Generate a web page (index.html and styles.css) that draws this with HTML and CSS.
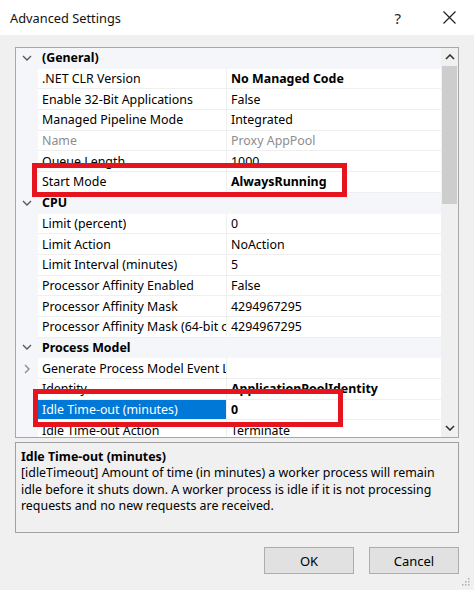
FILE: index.html
```html
<!DOCTYPE html>
<html>
<head>
<meta charset="utf-8">
<link rel="stylesheet" href="styles.css">
</head>
<body>
<div class="page">
  <div class="titlebar">
    <span class="title">Advanced Settings</span>
    <span class="help">?</span>
    <svg class="close" width="13" height="13" viewBox="0 0 13 13"><path d="M0.5 0.5 L12.5 12.5 M12.5 0.5 L0.5 12.5" stroke="#222" stroke-width="1.2" fill="none"/></svg>
  </div>
  <div class="body">
    <div class="grid">
      <div class="rows">
        <div class="cat"><span class="gut"><svg width="10" height="6" viewBox="0 0 10 6"><polyline points="1,1 5,5 9,1" fill="none" stroke="#555" stroke-width="1.3"/></svg></span><span class="catname">(General)</span></div>
        <div class="row"><span class="gut"></span><span class="name">.NET CLR Version</span><span class="val b">No Managed Code</span></div>
        <div class="row"><span class="gut"></span><span class="name">Enable 32-Bit Applications</span><span class="val">False</span></div>
        <div class="row"><span class="gut"></span><span class="name">Managed Pipeline Mode</span><span class="val">Integrated</span></div>
        <div class="row dis"><span class="gut"></span><span class="name">Name</span><span class="val">Proxy AppPool</span></div>
        <div class="row"><span class="gut"></span><span class="name">Queue Length</span><span class="val">1000</span></div>
        <div class="row"><span class="gut"></span><span class="name">Start Mode</span><span class="val b">AlwaysRunning</span></div>
        <div class="cat"><span class="gut"><svg width="10" height="6" viewBox="0 0 10 6"><polyline points="1,1 5,5 9,1" fill="none" stroke="#555" stroke-width="1.3"/></svg></span><span class="catname">CPU</span></div>
        <div class="row"><span class="gut"></span><span class="name">Limit (percent)</span><span class="val">0</span></div>
        <div class="row"><span class="gut"></span><span class="name">Limit Action</span><span class="val">NoAction</span></div>
        <div class="row"><span class="gut"></span><span class="name">Limit Interval (minutes)</span><span class="val">5</span></div>
        <div class="row"><span class="gut"></span><span class="name">Processor Affinity Enabled</span><span class="val">False</span></div>
        <div class="row"><span class="gut"></span><span class="name">Processor Affinity Mask</span><span class="val">4294967295</span></div>
        <div class="row"><span class="gut"></span><span class="name">Processor Affinity Mask (64-bit option)</span><span class="val">4294967295</span></div>
        <div class="cat"><span class="gut"><svg width="10" height="6" viewBox="0 0 10 6"><polyline points="1,1 5,5 9,1" fill="none" stroke="#555" stroke-width="1.3"/></svg></span><span class="catname">Process Model</span></div>
        <div class="row"><span class="gut"><svg width="6" height="10" viewBox="0 0 6 10"><polyline points="1,1 5,5 1,9" fill="none" stroke="#888" stroke-width="1.3"/></svg></span><span class="name">Generate Process Model Event Log Entry</span><span class="val"></span></div>
        <div class="row"><span class="gut"></span><span class="name">Identity</span><span class="val b">ApplicationPoolIdentity</span></div>
        <div class="row sel"><span class="gut"></span><span class="name">Idle Time-out (minutes)</span><span class="val b">0</span></div>
        <div class="row"><span class="gut"></span><span class="name">Idle Time-out Action</span><span class="val">Terminate</span></div>
      </div>
      <div class="scrollbar">
        <div class="arrow"><svg width="10" height="6" viewBox="0 0 10 6"><polyline points="1,5 5,1 9,5" fill="none" stroke="#333" stroke-width="1.6"/></svg></div>
        <div class="thumb"></div>
        <div class="track"></div>
        <div class="arrow"><svg width="10" height="6" viewBox="0 0 10 6"><polyline points="1,1 5,5 9,1" fill="none" stroke="#333" stroke-width="1.6"/></svg></div>
      </div>
    </div>
    <div class="desc">
      <div class="desc-title">Idle Time-out (minutes)</div>
      <div class="desc-text">[idleTimeout] Amount of time (in minutes) a worker process will remain idle before it shuts down. A worker process is idle if it is not processing requests and no new requests are received.</div>
    </div>
    <div class="buttons">
      <div class="btn">OK</div>
      <div class="btn">Cancel</div>
    </div>
  </div>
  <div class="mark mark1"></div>
  <div class="mark mark2"></div>
  <svg class="grip" width="10" height="10" viewBox="0 0 10 10"><g fill="#b0b0b0"><rect x="8" y="0" width="1.5" height="1.5"/><rect x="5" y="3" width="1.5" height="1.5"/><rect x="8" y="3" width="1.5" height="1.5"/><rect x="2" y="6" width="1.5" height="1.5"/><rect x="5" y="6" width="1.5" height="1.5"/><rect x="8" y="6" width="1.5" height="1.5"/></g></svg>
</div>
</body>
</html>
```
FILE: styles.css
```css
html, body {
  margin: 0;
  padding: 0;
}
body {
  font-family: "Noto Sans", "Open Sans", sans-serif;
  font-size: 12.4px;
  color: #000;
  background: #f0f0f0;
}
.page {
  position: relative;
  width: 474px;
  height: 590px;
  overflow: hidden;
  background: #f0f0f0;
}
.titlebar {
  height: 35px;
  background: #fff;
  display: flex;
  align-items: center;
  padding-left: 10px;
  box-sizing: border-box;
}
.title {
  font-size: 12.8px;
  flex: 1;
  color: #111;
}
.help {
  font-size: 15px;
  color: #222;
  margin-right: 42px;
}
.close {
  margin-right: 18px;
}
.body {
  padding: 12px 15px 0 15px;
}
.grid {
  height: 391px;
  border: 1px solid #a7a7a7;
  box-sizing: border-box;
  display: flex;
  background: #fff;
  overflow: hidden;
}
.rows {
  flex: 1;
  overflow: hidden;
}
.cat, .row {
  height: 20.7px;
  display: flex;
  align-items: stretch;
  white-space: nowrap;
}
.cat {
  background: #f4f6fa;
  border-bottom: 1px solid #f4f6fa;
  box-sizing: border-box;
}
.gut {
  width: 22px;
  flex: none;
  display: flex;
  align-items: center;
  justify-content: center;
  background: #f4f6fa;
}
.catname {
  font-weight: bold;
  display: flex;
  align-items: center;
  padding-left: 4px;
}
.row .name {
  width: 189px;
  flex: none;
  box-sizing: border-box;
  padding-left: 4px;
  overflow: hidden;
  display: flex;
  align-items: center;
  border-right: 1px solid #efefef;
  border-bottom: 1px solid #efefef;
}
.row .val {
  flex: 1;
  padding-left: 4px;
  display: flex;
  align-items: center;
  border-bottom: 1px solid #efefef;
  overflow: hidden;
}
.b {
  font-weight: bold;
}
.dis {
  color: #8d8d8d;
}
.sel .name {
  background: #0078d7;
  color: #fff;
}
.scrollbar {
  width: 17px;
  flex: none;
  display: flex;
  flex-direction: column;
  background: #f0f0f0;
}
.arrow {
  height: 18px;
  display: flex;
  align-items: center;
  justify-content: center;
}
.thumb {
  height: 138px;
  margin: 0 1px;
  background: #cdcdcd;
}
.track {
  flex: 1;
}
.desc {
  margin-top: 4px;
  height: 91px;
  border: 1px solid #a0a0a0;
  box-sizing: border-box;
  padding: 5px 5px;
  background: #f0f0f0;
}
.desc-title {
  font-weight: bold;
  line-height: 17px;
}
.desc-text {
  line-height: 16.5px;
}
.buttons {
  display: flex;
  justify-content: flex-end;
  gap: 15px;
  margin-top: 14px;
}
.btn {
  width: 90px;
  height: 27px;
  box-sizing: border-box;
  border: 1px solid #adadad;
  background: #e1e1e1;
  display: flex;
  align-items: center;
  justify-content: center;
  font-size: 13px;
}
.mark {
  position: absolute;
  border: 5px solid #e5141e;
  box-sizing: border-box;
}
.mark1 {
  left: 32px;
  top: 163px;
  width: 315px;
  height: 34px;
}
.mark2 {
  left: 33px;
  top: 389px;
  width: 310px;
  height: 38px;
}
.grip {
  position: absolute;
  right: 4px;
  bottom: 2px;
}
```
